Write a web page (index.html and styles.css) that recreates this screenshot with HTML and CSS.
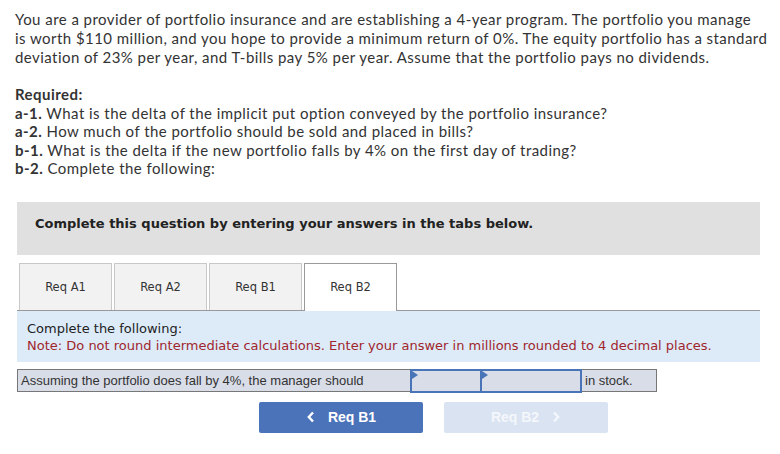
FILE: index.html
```html
<!DOCTYPE html>
<html lang="en">
<head>
    <meta charset="UTF-8">
    <title>Portfolio Insurance</title>
    <link rel="stylesheet" href="styles.css">
</head>
<body>
    <div class="question">
        <p class="intro">You are a provider of portfolio insurance and are establishing a 4-year program. The portfolio you manage<br>is worth $110 million, and you hope to provide a minimum return of 0%. The equity portfolio has a standard deviation of 23% per year, and T-bills pay 5% per year. Assume that the portfolio pays no dividends.</p>

        <div class="required">
            <strong>Required:</strong><br>
            <strong>a-1.</strong> What is the delta of the implicit put option conveyed by the portfolio insurance?<br>
            <strong>a-2.</strong> How much of the portfolio should be sold and placed in bills?<br>
            <strong>b-1.</strong> What is the delta if the new portfolio falls by 4% on the first day of trading?<br>
            <strong>b-2.</strong> Complete the following:
        </div>
    </div>

    <div class="answer-area">
        <div class="banner">Complete this question by entering your answers in the tabs below.</div>

        <div class="tabs">
            <div class="tab">Req A1</div>
            <div class="tab">Req A2</div>
            <div class="tab">Req B1</div>
            <div class="tab active">Req B2</div>
        </div>

        <div class="instructions">
            <div>Complete the following:</div>
            <div class="note">Note: Do not round intermediate calculations. Enter your answer in millions rounded to 4 decimal places.</div>
        </div>

        <table class="answer-row">
            <tr>
                <td class="label">Assuming the portfolio does fall by 4%, the manager should</td>
                <td class="entry short"><span class="flag"></span></td>
                <td class="entry long"><span class="flag"></span></td>
                <td class="label tail">in stock.</td>
            </tr>
        </table>

        <div class="nav">
            <button class="nav-btn prev">
                <svg width="10" height="12" viewBox="0 0 10 12"><path d="M7 1.5 L2.8 6 L7 10.5" fill="none" stroke="currentColor" stroke-width="2.4"/></svg>
                <span>Req B1</span>
            </button>
            <button class="nav-btn next" disabled>
                <span>Req B2</span>
                <svg width="10" height="12" viewBox="0 0 10 12"><path d="M3 1.5 L7.2 6 L3 10.5" fill="none" stroke="currentColor" stroke-width="2.4"/></svg>
            </button>
        </div>
    </div>
</body>
</html>
```

FILE: styles.css
```css
body {
    margin: 0;
    padding: 10px 4px 0 15px;
    background-color: #fff;
    color: #333;
}
.question {
    font-family: 'Lato', sans-serif;
    font-size: 15px;
    letter-spacing: 0.45px;
    line-height: 19px;
    color: #333;
}
.intro {
    margin: 0 0 18px 0;
}
.required {
    line-height: 18.5px;
}
.required strong {
    font-weight: bold;
}
.answer-area {
    margin: 24px 0 0 2px;
    width: 743px;
}
.banner {
    background-color: #e0e0e0;
    font-family: 'DejaVu Sans', Verdana, sans-serif;
    font-weight: bold;
    font-size: 13px;
    line-height: 16px;
    color: #222;
    padding: 14px 18px 23px 18px;
}
.tabs {
    display: flex;
    margin-top: 8px;
    padding-left: 2px;
    border-bottom: 1px solid #999;
    height: 47px;
}
.tab {
    width: 91px;
    height: 46px;
    margin-right: 2px;
    background-color: #f2f2f2;
    border: 1px solid #c8c8c8;
    border-bottom: none;
    font-family: 'DejaVu Sans', Tahoma, sans-serif;
    font-size: 11.5px;
    color: #333;
    display: flex;
    align-items: center;
    justify-content: center;
}
.tab.active {
    background-color: #fff;
    border-color: #999;
    height: 47px;
    margin-bottom: -1px;
}
.instructions {
    background-color: #ddebf9;
    font-family: 'DejaVu Sans', Verdana, sans-serif;
    font-size: 13px;
    line-height: 17px;
    color: #222;
    padding: 9px 10px 8px 10px;
}
.note {
    color: #a0262c;
}
.answer-row {
    margin-top: 7px;
    border-collapse: collapse;
    font-family: 'Liberation Sans', Arial, sans-serif;
    font-size: 13px;
    color: #333;
}
.answer-row td {
    height: 20px;
    padding: 0;
    background-color: #d9dde8;
}
.answer-row .label {
    border: 1px solid #777;
    padding: 0 3px;
    width: 386px;
}
.answer-row .tail {
    width: 68px;
}
.answer-row .entry {
    border: 2px solid #4a74b8;
    position: relative;
}
.entry.short {
    width: 68px;
}
.entry.long {
    width: 98px;
}
.flag {
    position: absolute;
    top: 0;
    left: 0;
    width: 0;
    height: 0;
    border-top: 4px solid transparent;
    border-bottom: 4px solid transparent;
    border-left: 6px solid #4a74b8;
}
.nav {
    display: flex;
    gap: 21px;
    margin: 9px 0 0 242px;
}
.nav-btn {
    width: 164px;
    height: 31px;
    border: none;
    border-radius: 2px;
    display: flex;
    align-items: center;
    justify-content: center;
    gap: 12px;
    font-family: 'Liberation Sans', Arial, sans-serif;
    font-weight: bold;
    font-size: 14px;
    color: #fff;
    padding: 0;
}
.nav-btn.prev {
    background-color: #4a73b9;
}
.nav-btn.next {
    background-color: #dae3f1;
    color: #f4f7fb;
}
```
